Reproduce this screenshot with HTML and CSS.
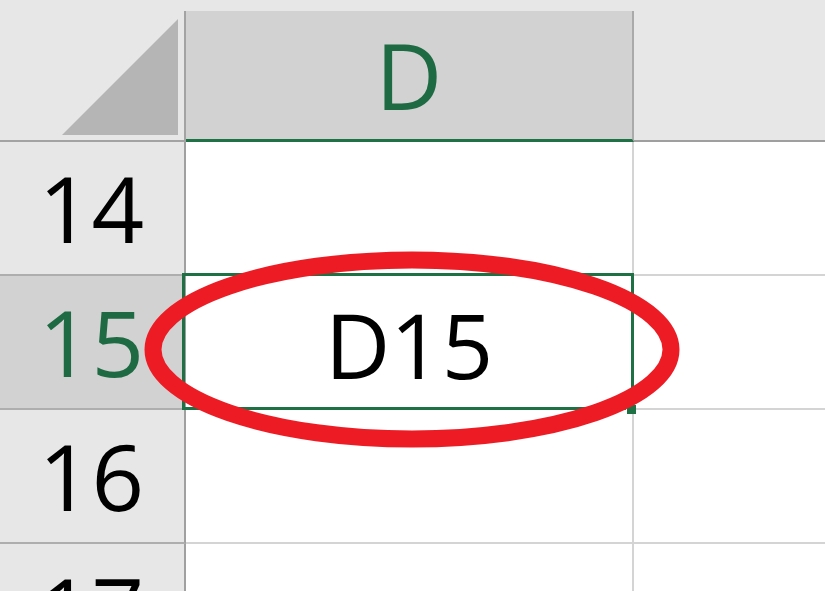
FILE: index.html
```html
<!DOCTYPE html>
<html lang="en">
<head>
<meta charset="utf-8">
<title>Cell D15</title>
<link rel="stylesheet" href="styles.css">
</head>
<body>
<div class="sheet">
  <div class="corner"><div class="corner-tri"></div></div>
  <div class="col-head col-head--active">D</div>
  <div class="col-head col-head--plain"></div>

  <div class="row-head">14</div>
  <div class="cell"></div>
  <div class="cell cell--last"></div>

  <div class="row-head row-head--active">15</div>
  <div class="cell cell--selected">
    <span class="cell-text">D15</span>
    <div class="selection"></div>
    <div class="fill-handle"></div>
  </div>
  <div class="cell cell--last"></div>

  <div class="row-head">16</div>
  <div class="cell"></div>
  <div class="cell cell--last"></div>

  <div class="row-head">17</div>
  <div class="cell"></div>
  <div class="cell cell--last"></div>

  <svg class="annotation" width="825" height="591" viewBox="0 0 825 591" aria-hidden="true">
    <ellipse cx="412" cy="349.5" rx="259" ry="89.5" fill="none" stroke="#ed1c24" stroke-width="17"/>
  </svg>
</div>
</body>
</html>
```

FILE: styles.css
```css
* {
  box-sizing: border-box;
}

html, body {
  margin: 0;
  padding: 0;
  background: #e6e7e6;
}

body {
  width: 825px;
  height: 591px;
  overflow: hidden;
  font-family: "Open Sans", "Noto Sans", "DejaVu Sans", sans-serif;
}

.sheet {
  position: relative;
  width: 825px;
  height: 591px;
  overflow: hidden;
  padding-top: 11px;
  display: grid;
  grid-template-columns: 186px 448px 1fr;
  grid-template-rows: 131px repeat(4, 134px);
  background: #e6e7e6;
}

.corner {
  display: flex;
  justify-content: flex-end;
  align-items: flex-end;
  padding: 0 6px 5px 0;
  background: #e6e7e6;
  border-right: 2px solid #a3a3a3;
  border-bottom: 2px solid #a3a3a3;
}

.corner-tri {
  width: 116px;
  height: 116px;
  background: #b4b5b4;
  clip-path: polygon(100% 0, 100% 100%, 0 100%);
}

.col-head {
  display: flex;
  align-items: center;
  justify-content: center;
  font-size: 92px;
  line-height: 1;
  color: #1e6b43;
}

.col-head--active {
  background: #d2d2d2;
  border-right: 2px solid #aaaaaa;
  border-bottom: 3px solid #1f7245;
}

.col-head--plain {
  background: #e6e7e6;
  border-bottom: 2px solid #9f9f9f;
}

.row-head {
  display: flex;
  align-items: center;
  justify-content: flex-end;
  padding-right: 40px;
  font-size: 92px;
  line-height: 1;
  color: #000;
  background: #e6e7e6;
  border-right: 2px solid #a0a0a0;
  border-bottom: 2px solid #aeaeae;
}

.row-head--active {
  background: #d2d2d2;
  color: #1e6b43;
}

.cell {
  background: #fff;
  border-right: 2px solid #d4d4d4;
  border-bottom: 2px solid #d4d4d4;
}

.cell--last {
  border-right: none;
}

.cell--selected {
  position: relative;
  display: flex;
  align-items: center;
  justify-content: center;
}

.cell-text {
  font-size: 90px;
  line-height: 1;
  color: #000;
  padding-top: 4px;
}

.selection {
  position: absolute;
  left: -4px;
  top: -3px;
  right: -2px;
  bottom: -2px;
  border: 3px solid #1e7145;
}

.fill-handle {
  position: absolute;
  right: -4px;
  bottom: -6px;
  width: 10px;
  height: 10px;
  background: #1e7145;
  border-left: 1px solid #fff;
  border-top: 1px solid #fff;
}

.annotation {
  position: absolute;
  left: 0;
  top: 0;
  pointer-events: none;
}
```
